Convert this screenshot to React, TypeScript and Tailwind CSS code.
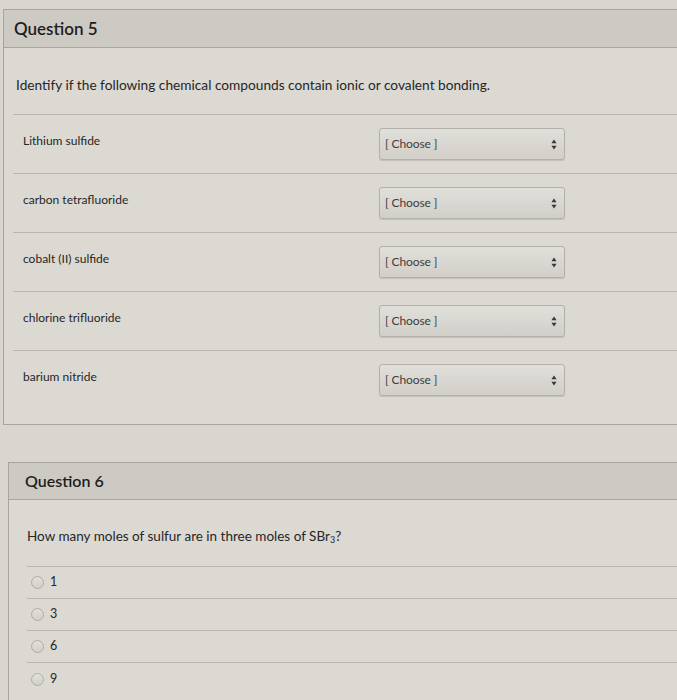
import React from "react";

const rows = [
  "Lithium sulfide",
  "carbon tetrafluoride",
  "cobalt (II) sulfide",
  "chlorine trifluoride",
  "barium nitride",
];

function Arrows() {
  return (
    <svg width="6" height="11" viewBox="0 0 6 11" className="shrink-0">
      <path d="M3 0.5 L5.6 4.2 L0.4 4.2 Z" fill="#3a3a3a" />
      <path d="M3 10.5 L5.6 6.8 L0.4 6.8 Z" fill="#3a3a3a" />
    </svg>
  );
}

function Select() {
  return (
    <div className="w-[186px] h-[32px] rounded-[3px] border border-[#b3b0aa] bg-gradient-to-b from-[#e1dfda] to-[#d2cfc9] shadow-[0_1px_1px_rgba(0,0,0,0.12)] flex items-center justify-between pl-[5px] pr-[7px]">
      <span className="text-[12px] text-[#3d3d3d] tracking-[-0.1px]">[ Choose ]</span>
      <Arrows />
    </div>
  );
}

function Radio() {
  return (
    <span className="w-[13px] h-[13px] rounded-full border border-[#b0ada8] bg-gradient-to-b from-[#e2e0db] to-[#d2cfca] shrink-0" />
  );
}

export default function App() {
  return (
    <div className="w-[677px] h-[700px] overflow-hidden bg-[#d9d6d0] font-['Lato','Noto_Sans',sans-serif] text-[#262626]">
      <div className="pt-[9px]">
        {/* Question 5 */}
        <div className="ml-[3px] border-t border-l border-b border-[#a8a59f] bg-[#dcd9d3]">
          <div className="h-[38px] bg-[#cdcac4] border-b border-[#a8a59f] flex items-center pl-[10px]">
            <span className="text-[17px] font-semibold text-[#1e1e1e]">Question 5</span>
          </div>
          <div className="pt-[28px] pb-[20px] pl-[12px] text-[13.7px] leading-[18px]">
            Identify if the following chemical compounds contain ionic or covalent bonding.
          </div>
          <div className="ml-[9px] border-t border-[#b9b6b0]">
            {rows.map((r, i) => (
              <div
                key={r}
                className={`h-[59px] flex items-start ${i < rows.length - 1 ? "border-b border-[#b9b6b0]" : ""}`}
              >
                <div className="w-[366px] pl-[10px] pt-[18px] text-[12px] leading-[16px]">{r}</div>
                <div className="pt-[13px]">
                  <Select />
                </div>
              </div>
            ))}
            <div className="h-[14px]" />
          </div>
        </div>

        {/* Question 6 */}
        <div className="mt-[37px] ml-[8px] border-t border-l border-[#a8a59f] bg-[#dcd9d3] pb-[20px]">
          <div className="h-[37px] bg-[#cdcac4] border-b border-[#a8a59f] flex items-center pl-[16px]">
            <span className="text-[16px] font-semibold text-[#1e1e1e]">Question 6</span>
          </div>
          <div className="pt-[27px] pb-[21px] pl-[18px] text-[13.5px] leading-[18px]">
            How many moles of sulfur are in three moles of SBr<sub className="text-[9px]">3</sub>?
          </div>
          <div className="ml-[18px] border-t border-[#b9b6b0]">
            {["1", "3", "6", "9"].map((o, i) => (
              <div
                key={o}
                className={`h-[32px] flex items-center gap-[6px] pl-[4px] ${i < 3 ? "border-b border-[#b9b6b0]" : ""}`}
              >
                <Radio />
                <span className="text-[12.5px]">{o}</span>
              </div>
            ))}
          </div>
        </div>
      </div>
    </div>
  );
}
